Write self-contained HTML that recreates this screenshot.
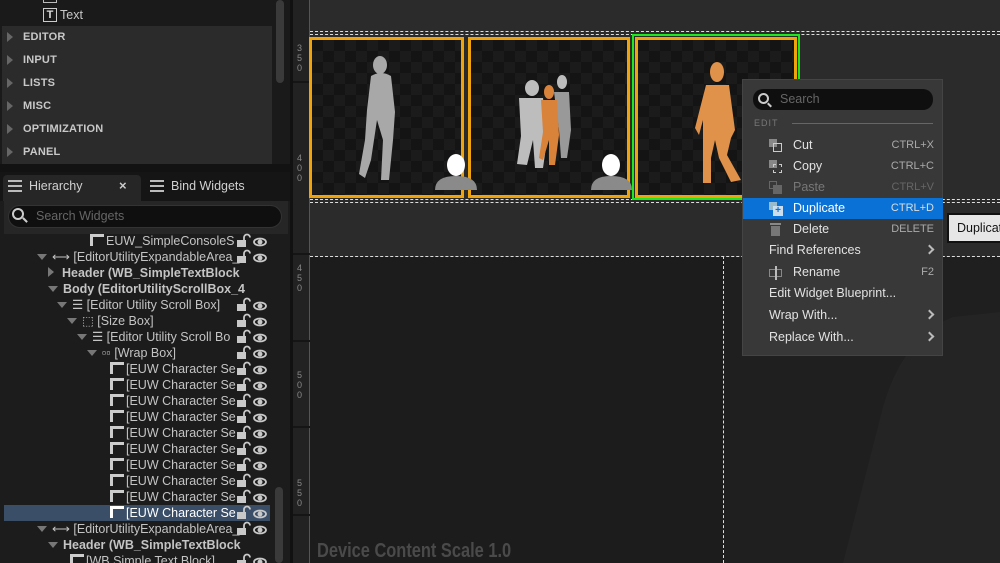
<!DOCTYPE html>
<html><head><meta charset="utf-8"><style>
*{margin:0;padding:0;box-sizing:border-box}
html,body{width:1000px;height:563px;overflow:hidden}
body{background:#1e1e1e;font-family:"Liberation Sans",sans-serif;position:relative;color:#c0c0c0}
.a{position:absolute}
.cat{position:absolute;left:23px;font-size:11px;font-weight:bold;color:#c8c8c8;letter-spacing:.2px}
.tri{position:absolute;left:7px;width:0;height:0;border-top:5px solid transparent;border-bottom:5px solid transparent;border-left:6px solid #666}
.row{position:absolute;height:16px;font-size:12.5px;line-height:16px;color:#c4c4c4;white-space:nowrap}
.wi{display:inline-block;width:14px;height:12px;border-left:3px solid #ccc;border-top:3px solid #ccc;margin-right:2px;vertical-align:-1px;position:relative}
.dn{display:inline-block;width:0;height:0;border-left:5px solid transparent;border-right:5px solid transparent;border-top:6px solid #777;margin-right:5px;vertical-align:1px}
.card{position:absolute;top:37px;height:161px;border:3px solid #efa30d;background-color:#141414;background-image:linear-gradient(45deg,#1b1b1b 25%,transparent 25%,transparent 75%,#1b1b1b 75%),linear-gradient(45deg,#1b1b1b 25%,transparent 25%,transparent 75%,#1b1b1b 75%);background-size:22px 22px;background-position:0 0,11px 11px}
.mi{position:absolute;left:0;width:200px;height:21px;font-size:12.5px;line-height:21px;color:#e2e2e2}
.mi .t{position:absolute;left:50px}
.mi .k{position:absolute;right:9px;font-size:11px;color:#aaa}
.mi .t2{position:absolute;left:26px}
.arr{position:absolute;right:10px;top:6px;width:7px;height:7px;border-right:2px solid #bbb;border-top:2px solid #bbb;transform:rotate(45deg)}
.mic{position:absolute;left:26px;top:4px;width:14px;height:13px}
.rl{position:absolute;left:297px;font-size:9px;color:#888;line-height:10px;width:8px}
</style></head><body>
<div class="a" style="left:0;top:0;width:290px;height:172px;background:#1a1a1a"></div>
<div class="a" style="left:43px;top:0;width:14px;height:3px;border:1px solid #bbb;border-top:none"></div>
<div class="a" style="left:43px;top:8px;width:14px;height:14px;border:1px solid #ccc;font-size:11px;font-weight:bold;text-align:center;line-height:12px;color:#ddd">T</div>
<div class="a" style="left:60px;top:8px;font-size:12.5px;color:#c8c8c8">Text</div>
<div class="a" style="left:2px;top:26px;width:270px;height:138px;background:#2b2b2b"></div>
<div class="a" style="left:276px;top:0;width:8px;height:83px;background:#3a3a3a;border-radius:4px"></div>
<div class="tri" style="top:32px"></div><div class="cat" style="top:31px">EDITOR</div>
<div class="tri" style="top:55px"></div><div class="cat" style="top:54px">INPUT</div>
<div class="tri" style="top:78px"></div><div class="cat" style="top:77px">LISTS</div>
<div class="tri" style="top:101px"></div><div class="cat" style="top:100px">MISC</div>
<div class="tri" style="top:124px"></div><div class="cat" style="top:123px">OPTIMIZATION</div>
<div class="tri" style="top:147px"></div><div class="cat" style="top:146px">PANEL</div>
<div class="a" style="left:0;top:164px;width:290px;height:8px;background:#121212"></div>
<div class="a" style="left:0;top:172px;width:290px;height:391px;background:#1c1c1c"></div>
<div class="a" style="left:0;top:172px;width:290px;height:29px;background:#151515"></div>
<div class="a" style="left:3px;top:175px;width:138px;height:26px;background:#262626;border-radius:4px 4px 0 0"></div>
<div class="a" style="left:8px;top:180px;width:14px;height:12px;border-top:2px solid #bbb;border-bottom:2px solid #bbb"><div style="margin-top:3px;height:2px;background:#bbb"></div></div>
<div class="a" style="left:29px;top:179px;font-size:12.5px;color:#d0d0d0">Hierarchy</div>
<div class="a" style="left:119px;top:178px;font-size:13px;color:#ccc;font-weight:bold">×</div>
<div class="a" style="left:150px;top:180px;width:14px;height:12px;border-top:2px solid #bbb;border-bottom:2px solid #bbb"><div style="margin-top:3px;height:2px;background:#bbb"></div></div>
<div class="a" style="left:171px;top:179px;font-size:12.5px;color:#d0d0d0">Bind Widgets</div>
<div class="a" style="left:4px;top:201px;width:284px;height:33px;background:#262626"></div>
<div class="a" style="left:8px;top:205px;width:274px;height:23px;background:#0f0f0f;border:1px solid #333;border-radius:12px"></div>
<div class="a" style="left:12px;top:208px;width:12px;height:12px;border:2px solid #ccc;border-radius:50%"></div>
<div class="a" style="left:22px;top:219px;width:6px;height:2px;background:#ccc;transform:rotate(45deg)"></div>
<div class="a" style="left:36px;top:209px;font-size:12.5px;color:#666">Search Widgets</div>
<div class="a" style="left:4px;top:505px;width:266px;height:16px;background:#3b4e68"></div>
<div class="a" style="left:275px;top:487px;width:8px;height:76px;background:#3a3a3a;border-radius:4px"></div>

<div class="row" style="left:90px;top:233px"><span class="wi"></span>EUW_SimpleConsoleS</div>
<div class="row" style="left:37px;top:249px"><span class="dn"></span>⟷ [EditorUtilityExpandableArea_</div>
<div class="row" style="left:48px;top:265px;font-weight:bold"><span style="display:inline-block;border-top:5px solid transparent;border-bottom:5px solid transparent;border-left:6px solid #777;margin-right:8px"></span>Header (WB_SimpleTextBlock</div>
<div class="row" style="left:48px;top:281px;font-weight:bold"><span class="dn"></span>Body (EditorUtilityScrollBox_4</div>
<div class="row" style="left:57px;top:297px"><span class="dn"></span>☰ [Editor Utility Scroll Box]</div>
<div class="row" style="left:67px;top:313px"><span class="dn"></span>⬚ [Size Box]</div>
<div class="row" style="left:77px;top:329px"><span class="dn"></span>☰ [Editor Utility Scroll Bo</div>
<div class="row" style="left:87px;top:345px"><span class="dn"></span>▫▫ [Wrap Box]</div>
<div class="row" style="left:110px;top:361px"><span class="wi"></span>[EUW Character Se</div>
<div class="row" style="left:110px;top:377px"><span class="wi"></span>[EUW Character Se</div>
<div class="row" style="left:110px;top:393px"><span class="wi"></span>[EUW Character Se</div>
<div class="row" style="left:110px;top:409px"><span class="wi"></span>[EUW Character Se</div>
<div class="row" style="left:110px;top:425px"><span class="wi"></span>[EUW Character Se</div>
<div class="row" style="left:110px;top:441px"><span class="wi"></span>[EUW Character Se</div>
<div class="row" style="left:110px;top:457px"><span class="wi"></span>[EUW Character Se</div>
<div class="row" style="left:110px;top:473px"><span class="wi"></span>[EUW Character Se</div>
<div class="row" style="left:110px;top:489px"><span class="wi"></span>[EUW Character Se</div>
<div class="row" style="left:110px;top:505px;color:#fff"><span class="wi" style="border-color:#fff"></span>[EUW Character Se</div>
<div class="row" style="left:37px;top:521px"><span class="dn"></span>⟷ [EditorUtilityExpandableArea_</div>
<div class="row" style="left:48px;top:537px;font-weight:bold"><span class="dn"></span>Header (WB_SimpleTextBlock</div>
<div class="row" style="left:70px;top:553px"><span class="wi"></span>[WB Simple Text Block]</div>
<svg class="a" style="left:233px;top:0" width="60" height="563">
<defs><g id="li" fill="none" stroke="#c8c8c8" stroke-width="1.8"><rect x="4" y="6" width="9" height="7" fill="#c8c8c8" stroke="none"/><path d="M11 6 V3.5 a3 3 0 0 1 6 0"/><ellipse cx="27" cy="8" rx="6" ry="3.5"/><circle cx="27" cy="8" r="1.6" fill="#c8c8c8"/></g></defs>
<use href="#li" y="234"/><use href="#li" y="250"/><use href="#li" y="298"/><use href="#li" y="314"/><use href="#li" y="330"/><use href="#li" y="346"/>
<use href="#li" y="362"/><use href="#li" y="378"/><use href="#li" y="394"/><use href="#li" y="410"/><use href="#li" y="426"/><use href="#li" y="442"/><use href="#li" y="458"/><use href="#li" y="474"/><use href="#li" y="490"/><use href="#li" y="506"/><use href="#li" y="522"/><use href="#li" y="554"/>
</svg>
<div class="a" style="left:290px;top:0;width:3px;height:563px;background:#111"></div>
<div class="a" style="left:293px;top:0;width:17px;height:563px;background:#222"></div>
<div class="a" style="left:309px;top:0;width:1px;height:563px;background:#555"></div>
<div class="a" style="left:293px;top:81px;width:17px;height:2px;background:#151515"></div>
<div class="a" style="left:293px;top:253px;width:17px;height:2px;background:#151515"></div>
<div class="a" style="left:293px;top:340px;width:17px;height:2px;background:#151515"></div>
<div class="a" style="left:293px;top:426px;width:17px;height:2px;background:#151515"></div>
<div class="a" style="left:293px;top:514px;width:17px;height:2px;background:#151515"></div>
<div class="rl" style="top:43px">3<br>5<br>0</div>
<div class="rl" style="top:153px">4<br>0<br>0</div>
<div class="rl" style="top:263px">4<br>5<br>0</div>
<div class="rl" style="top:370px">5<br>0<br>0</div>
<div class="rl" style="top:478px">5<br>5<br>0</div>
<div class="a" style="left:310px;top:0;width:690px;height:257px;background:#2b2b2b"></div>
<div class="a" style="left:310px;top:257px;width:413px;height:306px;background:#1c1c1c"></div>
<div class="a" style="left:723px;top:257px;width:277px;height:306px;background:#1f1f1f"></div>
<svg class="a" style="left:723px;top:257px" width="277" height="306"><path d="M120 306 L160 150 Q180 80 230 60 L277 55 V306 Z" fill="#242424"/></svg>
<div class="a" style="left:310px;top:31px;width:690px;height:0;border-top:1px dashed #ddd"></div>
<div class="a" style="left:310px;top:34px;width:690px;height:0;border-top:1px dashed #ddd"></div>
<div class="a" style="left:310px;top:199px;width:690px;height:0;border-top:1px dashed #ddd"></div>
<div class="a" style="left:310px;top:202px;width:690px;height:0;border-top:1px dashed #ddd"></div>
<div class="a" style="left:310px;top:256px;width:690px;height:0;border-top:1px dashed #ddd"></div>
<div class="a" style="left:723px;top:256px;width:0;height:307px;border-left:1px dashed #ddd"></div>
<div class="card" style="left:309px;width:155px"></div>
<div class="card" style="left:468px;width:162px"></div>
<div class="a" style="left:632px;top:34px;width:168px;height:166px;border:2px solid #1fe61f"></div>
<div class="card" style="left:635px;width:162px"></div>
<svg class="a" style="left:311px;top:40px" width="490" height="155">
<g fill="#a8a8a8"><ellipse cx="69" cy="25" rx="7" ry="9"/><path d="M60 36 Q70 30 80 36 L84 72 L82 100 L78 140 L70 140 L72 100 L66 80 L60 120 L54 138 L48 134 L54 100 L56 70 Z"/></g>
<g fill="#bdbdbd"><ellipse cx="221" cy="48" rx="7" ry="8"/><path d="M208 58 L232 58 L236 100 L232 128 L224 128 L222 100 L216 125 L206 124 L210 96 Z"/><ellipse cx="251" cy="42" rx="5" ry="7"/><path d="M243 52 L258 52 L260 90 L256 118 L250 118 L248 90 Z" fill="#999"/></g>
<g fill="#d9823a"><ellipse cx="238" cy="52" rx="5" ry="7"/><path d="M230 60 L246 60 L248 95 L244 125 L238 125 L238 100 L232 120 L228 118 L232 92 Z"/></g>
<g fill="#e0914a"><ellipse cx="406" cy="32" rx="7" ry="10"/><path d="M395 45 L418 45 L424 90 L420 98 L416 115 L430 140 L420 142 L408 118 L404 100 L400 118 L400 143 L392 143 L392 110 L392 80 L388 95 L384 88 Z"/></g>
<g fill="#8a8a8a"><path d="M124 150 Q124 136 145 136 Q166 136 166 150Z"/><path d="M280 150 Q280 136 300 136 Q321 136 321 150Z"/></g>
<g fill="#fff"><ellipse cx="145" cy="125" rx="9" ry="11"/><ellipse cx="300" cy="125" rx="9" ry="11"/></g>
</svg>
<div class="a" style="left:317px;top:540px;font-size:20px;font-weight:bold;color:#4a4a4a;transform:scaleX(.82);transform-origin:left">Device Content Scale 1.0</div>
<div class="a" style="left:947px;top:213px;width:60px;height:30px;background:#e6e6e6;border:2px solid #111;font-size:12.5px;color:#111;line-height:26px;padding-left:8px">Duplicat</div>
<div class="a" style="left:742px;top:79px;width:201px;height:277px;background:#383838;border:1px solid #444">
<div class="a" style="left:10px;top:9px;width:180px;height:21px;background:#0f0f0f;border-radius:10px"></div>
<div class="a" style="left:15px;top:13px;width:11px;height:11px;border:2px solid #ccc;border-radius:50%"></div>
<div class="a" style="left:24px;top:24px;width:5px;height:2px;background:#ccc;transform:rotate(45deg)"></div>
<div class="a" style="left:37px;top:12px;font-size:12.5px;color:#666">Search</div>
<div class="a" style="left:11px;top:38px;font-size:9px;color:#777;letter-spacing:1px">EDIT</div>
<div class="a" style="left:49px;top:43px;width:141px;height:1px;background:#666"></div>
<div class="mi" style="top:55px"><div class="mic"><div style="position:absolute;left:0;top:0;width:8px;height:8px;background:#888"></div><div style="position:absolute;left:4px;top:4px;width:9px;height:9px;border:1.5px solid #ccc"></div></div><span class="t">Cut</span><span class="k">CTRL+X</span></div>
<div class="mi" style="top:76px"><div class="mic"><div style="position:absolute;left:0;top:0;width:8px;height:8px;background:#888"></div><div style="position:absolute;left:4px;top:4px;width:9px;height:9px;border:1.5px dashed #ccc"></div></div><span class="t">Copy</span><span class="k">CTRL+C</span></div>
<div class="mi" style="top:97px;color:#777"><div class="mic"><div style="position:absolute;left:0;top:0;width:8px;height:8px;border:1px solid #666"></div><div style="position:absolute;left:4px;top:4px;width:9px;height:9px;background:#666"></div></div><span class="t">Paste</span><span class="k" style="color:#666">CTRL+V</span></div>
<div class="mi" style="top:118px;background:#0a72d6;color:#fff"><div class="mic"><div style="position:absolute;left:0;top:0;width:8px;height:8px;background:#9bc"></div><div style="position:absolute;left:4px;top:4px;width:10px;height:10px;background:#cde;color:#0a72d6;font-size:10px;line-height:10px;text-align:center;font-weight:bold">+</div></div><span class="t">Duplicate</span><span class="k" style="color:#ddd">CTRL+D</span></div>
<div class="mi" style="top:139px"><div class="mic"><div style="position:absolute;left:1px;top:0;width:11px;height:2px;background:#888"></div><div style="position:absolute;left:2px;top:3px;width:9px;height:10px;background:#777"></div></div><span class="t">Delete</span><span class="k">DELETE</span></div>
<div class="mi" style="top:160px"><span class="t2">Find References</span><span class="arr"></span></div>
<div class="mi" style="top:182px"><div class="mic"><div style="position:absolute;left:0;top:3px;width:13px;height:8px;border:1.5px solid #888"></div><div style="position:absolute;left:6px;top:0;width:2px;height:14px;background:#bbb"></div></div><span class="t">Rename</span><span class="k">F2</span></div>
<div class="mi" style="top:203px"><span class="t2">Edit Widget Blueprint...</span></div>
<div class="mi" style="top:225px"><span class="t2">Wrap With...</span><span class="arr"></span></div>
<div class="mi" style="top:247px"><span class="t2">Replace With...</span><span class="arr"></span></div>
</div>
</body></html>
